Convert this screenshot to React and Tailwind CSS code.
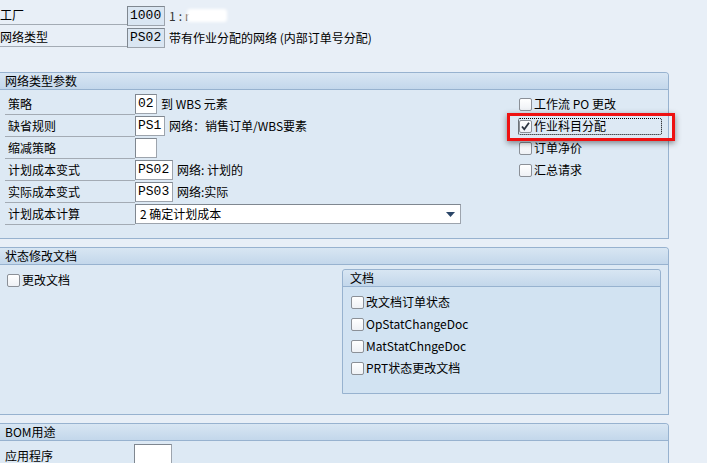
import React from 'react';

const cjk = "font-['Noto_Sans_CJK_SC','Noto_Sans',sans-serif]";
const mono = "font-['Liberation_Mono','DejaVu_Sans_Mono',monospace]";

const CheckBox = ({ checked }) => (
  <span className="w-[13px] h-[13px] shrink-0 rounded-[2px] border border-[#8b9097] bg-gradient-to-b from-white to-[#eef1f5] flex items-center justify-center">
    {checked && (
      <svg width="11" height="11" viewBox="0 0 11 11">
        <path d="M2 5.5 L4.3 8.3 L9 1.8" fill="none" stroke="#2c3540" strokeWidth="1.8" />
      </svg>
    )}
  </span>
);

const CheckRow = ({ label, checked, focused }) => (
  <div className="relative h-[22px] flex items-center gap-[2px]">
    {focused && (
      <span className="absolute left-[-1px] top-[3px] w-[144px] h-[17px] border border-dotted border-black rounded-[2px]" />
    )}
    <CheckBox checked={checked} />
    <span>{label}</span>
  </div>
);

const Field = ({ value, width, ro }) => (
  <span
    className={`${mono} h-[20px] shrink-0 flex items-center px-[2px] text-[13px] border border-[#9da4ad] border-t-[#7f8790] border-l-[#7f8790] ${
      ro ? 'bg-[#dae6f2]' : 'bg-white'
    }`}
    style={{ width }}
  >
    {value}
  </span>
);

const ParamRow = ({ label, children }) => (
  <div className="h-[22px] flex items-center">
    <div className="w-[130px] h-[21px] pl-[3px] flex items-center border-b border-[#a3abb4]">{label}</div>
    {children}
  </div>
);

const PanelHead = ({ title }) => (
  <div className="h-[17px] pl-[5px] flex items-center bg-gradient-to-b from-[#d8e6f3] to-[#c3d7eb] border-b border-[#97b2cf] rounded-tr-[3px]">
    {title}
  </div>
);

export default function App() {
  return (
    <div className={`${cjk} relative w-[707px] h-[463px] overflow-hidden bg-[#e8eff7] text-[12px] leading-[14px] text-black`}>
      {/* header fields */}
      <div className="pt-[6px] flex flex-col gap-[3px]">
        <div className="h-[19px] flex items-center">
          <div className="w-[127px] h-[19px] flex items-center border-b border-[#a3abb4]">工厂</div>
          <Field value="1000" width={38} ro />
          <span className="ml-[4px] text-[#333] tracking-[3px]">1:r</span>
          <span className="ml-[-6px] w-[40px] h-[13px] bg-white blur-[1.5px] rounded-[3px]" />
        </div>
        <div className="h-[19px] flex items-center">
          <div className="w-[127px] h-[19px] flex items-center border-b border-[#a3abb4]">网络类型</div>
          <Field value="PS02" width={38} ro />
          <span className="ml-[4px]">带有作业分配的网络 (内部订单号分配)</span>
        </div>
      </div>

      {/* 网络类型参数 */}
      <section className="mt-[25px] w-[669px] h-[167px] border border-l-0 border-[#97b2cf] bg-[#dde9f4] rounded-tr-[4px]">
        <PanelHead title="网络类型参数" />
        <div className="flex pt-[3px]">
          <div className="w-[519px] pl-[5px] flex flex-col">
            <ParamRow label="策略">
              <Field value="02" width={22} />
              <span className="ml-[4px]">到 WBS 元素</span>
            </ParamRow>
            <ParamRow label="缺省规则">
              <Field value="PS1" width={30} />
              <span className="ml-[4px]">网络：销售订单/WBS要素</span>
            </ParamRow>
            <ParamRow label="缩减策略">
              <Field value="" width={22} />
            </ParamRow>
            <ParamRow label="计划成本变式">
              <Field value="PS02" width={38} />
              <span className="ml-[4px]">网络: 计划的</span>
            </ParamRow>
            <ParamRow label="实际成本变式">
              <Field value="PS03" width={38} />
              <span className="ml-[4px]">网络:实际</span>
            </ParamRow>
            <ParamRow label="计划成本计算">
              <div className="w-[326px] h-[20px] flex items-center justify-between pl-[4px] pr-[5px] bg-white border border-[#9da4ad] border-t-[#7f8790] border-l-[#7f8790]">
                <span>2 确定计划成本</span>
                <svg width="9" height="5" viewBox="0 0 9 5">
                  <path d="M0 0 H9 L4.5 5 Z" fill="#2b4668" />
                </svg>
              </div>
            </ParamRow>
          </div>
          <div className="flex flex-col">
            <CheckRow label="工作流 PO 更改" />
            <CheckRow label="作业科目分配" checked focused />
            <CheckRow label="订单净价" />
            <CheckRow label="汇总请求" />
          </div>
        </div>
      </section>

      {/* 状态修改文档 */}
      <section className="mt-[8px] w-[669px] h-[168px] border border-l-0 border-[#97b2cf] bg-[#dde9f4] rounded-tr-[4px]">
        <PanelHead title="状态修改文档" />
        <div className="flex pt-[4px]">
          <div className="w-[342px] pl-[7px]">
            <CheckRow label="更改文档" />
          </div>
          <div className="w-[319px] h-[125px] border border-[#97b2cf] bg-[#d2e3f2] rounded-t-[3px]">
            <div className="h-[17px] pl-[7px] flex items-center bg-gradient-to-b from-[#d8e6f3] to-[#c3d7eb] border-b border-[#97b2cf] rounded-t-[3px]">
              文档
            </div>
            <div className="pt-[4px] pl-[8px] flex flex-col">
              <CheckRow label="改文档订单状态" />
              <CheckRow label="OpStatChangeDoc" />
              <CheckRow label="MatStatChngeDoc" />
              <CheckRow label="PRT状态更改文档" />
            </div>
          </div>
        </div>
      </section>

      {/* BOM用途 */}
      <section className="mt-[8px] w-[669px] h-[60px] border border-l-0 border-[#97b2cf] bg-[#dde9f4] rounded-tr-[4px]">
        <PanelHead title="BOM用途" />
        <div className="flex items-start pt-[3px] pl-[5px]">
          <div className="w-[129px] pt-[5px]">应用程序</div>
          <span className="w-[38px] h-[22px] bg-white border border-[#9da4ad] border-t-[#7f8790] border-l-[#7f8790]" />
        </div>
      </section>

      {/* annotation */}
      <div className="absolute left-[507px] top-[113px] w-[168px] h-[28px] border-[3px] border-[#ee1111] shadow-[0_2px_6px_rgba(0,0,0,0.45)]" />
    </div>
  );
}
